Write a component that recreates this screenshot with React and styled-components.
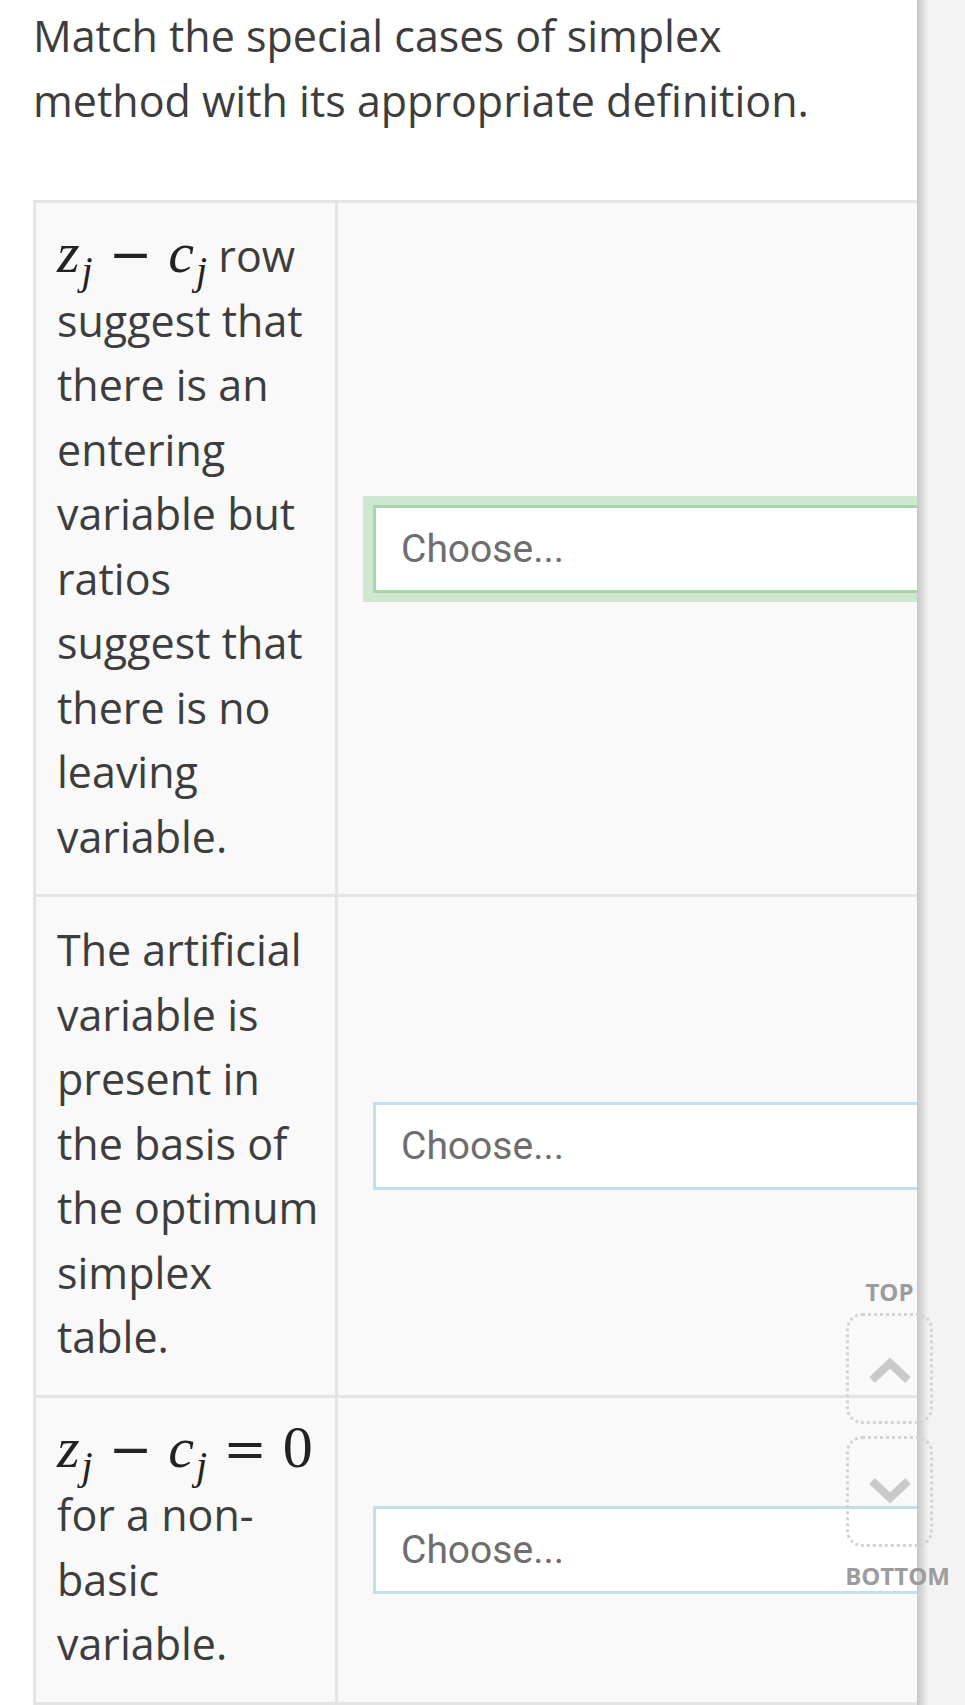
import styled, { createGlobalStyle } from 'styled-components';

const GlobalStyle = createGlobalStyle`
    html, body {
        margin: 0;
        padding: 0;
        overflow: hidden;
        background: #ffffff;
    }
    body {
        font-family: "Open Sans", "Noto Sans", sans-serif;
        color: #3d3d3d;
    }
`

const rows = [
    {
        math: 'row',
        text: 'suggest that there is an entering variable but ratios suggest that there is no leaving variable.',
        focused: true,
    },
    {
        text: 'The artificial variable is present in the basis of the optimum simplex table.',
    },
    {
        math: 'zero',
        text: 'for a non-basic variable.',
    },
];

const ZjCj = ({ zero }) => (
    <MathExpr>
        <Var>z</Var><Sub>j</Sub>
        <Op>−</Op>
        <Var>c</Var><Sub>j</Sub>
        {zero && (<><Op>=</Op><Num>0</Num></>)}
    </MathExpr>
)

const ChevronUp = () => (
    <svg width="44" height="30" viewBox="0 0 44 30">
        <polyline points="4,26 22,9 40,26" fill="none" stroke="#c9c9c9" strokeWidth="8" />
    </svg>
)

const ChevronDown = () => (
    <svg width="44" height="30" viewBox="0 0 44 30">
        <polyline points="4,4 22,21 40,4" fill="none" stroke="#c9c9c9" strokeWidth="8" />
    </svg>
)

const App = () => {
    return (
        <Page>
            <GlobalStyle />
            <Main>
                <Title>Match the special cases of simplex method with its appropriate definition.</Title>
                <Table>
                    {rows.map((row, i) => (
                        <Row key={i}>
                            <Question>
                                {row.math === 'row' && (<><ZjCj /> row </>)}
                                {row.math === 'zero' && (<><ZjCj zero /> </>)}
                                {row.text}
                            </Question>
                            <Answer>
                                <SelectWrap $focused={row.focused}>
                                    <Select $focused={row.focused}>Choose...</Select>
                                </SelectWrap>
                            </Answer>
                        </Row>
                    ))}
                </Table>
            </Main>
            <Strip />
            <ScrollNav>
                <NavLabel>TOP</NavLabel>
                <NavButton><ChevronUp /></NavButton>
                <NavButton><ChevronDown /></NavButton>
                <NavLabel $shift>BOTTOM</NavLabel>
            </ScrollNav>
        </Page>
    )
}

export default App;

const Page = styled.div`
    position: relative;
    display: flex;
    width: 965px;
    height: 1705px;
    overflow: hidden;
`

const Main = styled.div`
    width: 917px;
    flex: none;
    overflow: hidden;
    padding: 4px 0 0 33px;
    box-sizing: border-box;
    background: #ffffff;
`

const Strip = styled.div`
    flex: 1;
    background: linear-gradient(to right, #c6c6c6 0px, #d6d6d6 4px, #ebebeb 9px, #f3f3f3 12px, #f3f3f3 100%);
`

const Title = styled.h1`
    margin: 0 0 67px 0;
    width: 810px;
    font-size: 43px;
    line-height: 64.5px;
    font-weight: 400;
    color: #3d3d3d;
`

const Table = styled.div`
    width: 1000px;
    border-top: 3px solid #e4e4e4;
    border-left: 3px solid #e4e4e4;
    background: #f9f9f9;
`

const Row = styled.div`
    display: grid;
    grid-template-columns: 302px 1fr;
    border-bottom: 3px solid #e4e4e4;
`

const Question = styled.div`
    padding: 21px 12px 25px 21px;
    border-right: 3px solid #e4e4e4;
    font-size: 43px;
    line-height: 64.5px;
    color: #3d3d3d;
`

const Answer = styled.div`
    display: flex;
    align-items: center;
    padding: 0 0 0 25px;
`

const SelectWrap = styled.div`
    flex: 1;
    padding: 9px 0 9px 10px;
    background: ${(p) => (p.$focused ? '#cde8cf' : 'transparent')};
`

const Select = styled.div`
    height: 82px;
    display: flex;
    align-items: center;
    padding-left: 25px;
    background: #ffffff;
    border: 3px solid ${(p) => (p.$focused ? '#a9d5ab' : '#c0e1ec')};
    font-family: Roboto, "Liberation Sans", sans-serif;
    font-size: 39px;
    color: #6e6e6e;
`

const MathExpr = styled.span`
    font-family: "Liberation Serif", "DejaVu Serif", serif;
    font-size: 58px;
    line-height: 0;
    white-space: nowrap;
    color: #222222;
`

const Var = styled.span`
    font-style: italic;
`

const Sub = styled.span`
    font-style: italic;
    font-size: 40px;
    position: relative;
    top: 12px;
    margin-left: 2px;
`

const Op = styled.span`
    font-family: "DejaVu Serif", serif;
    font-size: 52px;
    margin: 0 16px;
`

const Num = styled.span`
    font-size: 60px;
`

const ScrollNav = styled.div`
    position: absolute;
    left: 846px;
    top: 1279px;
    width: 87px;
    display: flex;
    flex-direction: column;
    align-items: center;
    gap: 12px;
`

const NavLabel = styled.div`
    font-family: "Open Sans", sans-serif;
    font-weight: 700;
    font-size: 24px;
    line-height: 26px;
    color: #9c9c9c;
    margin-left: ${(p) => (p.$shift ? '16px' : '0')};
    margin-top: ${(p) => (p.$shift ? '4px' : '0')};
    margin-bottom: ${(p) => (p.$shift ? '0' : '-4px')};
`

const NavButton = styled.div`
    width: 87px;
    height: 111px;
    box-sizing: border-box;
    border: 3px dotted #d3d3d3;
    border-radius: 16px;
    display: flex;
    align-items: center;
    justify-content: center;
`
